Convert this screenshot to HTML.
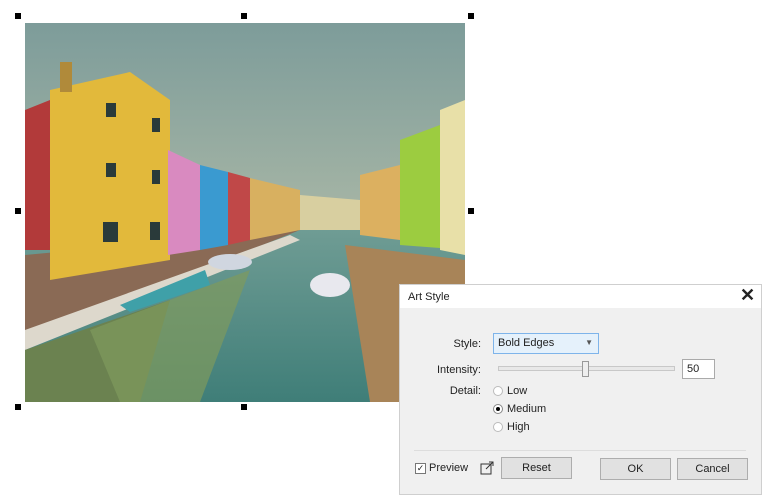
<!DOCTYPE html>
<html><head><style>
body{margin:0;width:768px;height:498px;background:#fff;position:relative;overflow:hidden;font-family:"Liberation Sans",sans-serif;font-size:11px;color:#222}
.h{position:absolute;width:6px;height:6px;background:#000}
.abs{position:absolute}
.btn{position:absolute;height:22px;background:#e1e1e1;border:1px solid #adadad;box-sizing:border-box;text-align:center;line-height:20px}
.rad{position:absolute;width:10px;height:10px;border:1px solid #bbb;border-radius:50%;background:#fff;box-sizing:border-box}
</style></head><body>
<svg class="abs" style="left:25px;top:23px" width="440" height="379" viewBox="25 23 440 379">
<defs>
<linearGradient id="sky" x1="0" y1="0" x2="0" y2="1"><stop offset="0" stop-color="#7d9c9a"/><stop offset=".55" stop-color="#a9b7a6"/><stop offset="1" stop-color="#e4dcb0"/></linearGradient>
<linearGradient id="wat" x1="0" y1="0" x2="0" y2="1"><stop offset="0" stop-color="#6f9c94"/><stop offset="1" stop-color="#3f7e78"/></linearGradient>
</defs>
<rect x="25" y="23" width="440" height="379" fill="url(#sky)"/>
<rect x="25" y="230" width="440" height="172" fill="url(#wat)"/>
<polygon points="25,255 240,235 300,230 25,340" fill="#8a6a55"/>
<polygon points="25,330 290,235 300,240 25,350" fill="#ddd8cc"/>
<polygon points="25,350 170,300 140,402 25,402" fill="#6b8250"/>
<polygon points="90,330 250,270 200,402 120,402" fill="#7f9a5c" opacity=".7"/>
<polygon points="25,110 50,100 50,250 25,250" fill="#b23a3a"/>
<polygon points="50,90 130,72 170,100 170,260 50,280" fill="#e2b93b"/>
<rect x="60" y="62" width="12" height="30" fill="#b08a3a"/>
<polygon points="168,150 200,165 200,250 168,255" fill="#d98ac0"/>
<polygon points="200,165 228,172 228,245 200,250" fill="#3a9ad0"/>
<polygon points="228,172 250,178 250,240 228,245" fill="#c04848"/>
<polygon points="250,178 300,190 300,230 250,240" fill="#d8b060"/>
<polygon points="300,195 360,200 360,230 300,230" fill="#d8cfa0"/>
<polygon points="360,175 400,165 400,240 360,235" fill="#dcb060"/>
<polygon points="400,140 440,125 440,248 400,245" fill="#9ccc40"/>
<polygon points="440,110 465,100 465,255 440,250" fill="#e8e0a8"/>
<polygon points="345,245 465,260 465,402 370,402" fill="#a88458"/>
<polygon points="120,305 205,270 210,285 130,312" fill="#3fa0a8"/>
<ellipse cx="330" cy="285" rx="20" ry="12" fill="#e8e8ee"/>
<ellipse cx="230" cy="262" rx="22" ry="8" fill="#d0d6e0"/>
<g fill="#2a3a3a"><rect x="106" y="103" width="10" height="14"/><rect x="152" y="118" width="8" height="14"/><rect x="106" y="163" width="10" height="14"/><rect x="152" y="170" width="8" height="14"/><rect x="103" y="222" width="15" height="20"/><rect x="150" y="222" width="10" height="18"/></g>
</svg>
<div class="h" style="left:15px;top:13px"></div><div class="h" style="left:241px;top:13px"></div><div class="h" style="left:468px;top:13px"></div>
<div class="h" style="left:15px;top:208px"></div><div class="h" style="left:468px;top:208px"></div>
<div class="h" style="left:15px;top:404px"></div><div class="h" style="left:241px;top:404px"></div>

<div class="abs" style="left:399px;top:284px;width:363px;height:211px;background:#f0f0f0;border:1px solid #cfcfcf;box-sizing:border-box">
<div class="abs" style="left:0;top:0;right:0;height:23px;background:#fff"></div>
<div class="abs" style="left:8px;top:6px">Art Style</div>
<div class="abs" style="left:340px;top:0px;font-size:18px;font-weight:bold">✕</div>
<div class="abs" style="left:0;width:81px;top:53px;text-align:right">Style:</div>
<div class="abs" style="left:93px;top:48px;width:106px;height:21px;border:1px solid #7eb4ea;background:#e5f1fb;box-sizing:border-box;padding:3px 4px">Bold Edges<span class="abs" style="right:5px;top:4px;font-size:8px;color:#555">▼</span></div>
<div class="abs" style="left:0;width:81px;top:79px;text-align:right">Intensity:</div>
<div class="abs" style="left:98px;top:81px;width:175px;height:3px;border:1px solid #c8c8c8;background:#e8e8e8"></div>
<div class="abs" style="left:182px;top:76px;width:5px;height:14px;border:1px solid #999;background:#eee"></div>
<div class="abs" style="left:282px;top:74px;width:33px;height:20px;border:1px solid #aaa;background:#fff;box-sizing:border-box;padding:3px 4px">50</div>
<div class="abs" style="left:0;width:81px;top:100px;text-align:right">Detail:</div>
<div class="rad" style="left:93px;top:101px"></div><div class="abs" style="left:107px;top:100px">Low</div>
<div class="rad" style="left:93px;top:119px;border-color:#888"><div class="abs" style="left:2px;top:2px;width:4px;height:4px;border-radius:50%;background:#000"></div></div><div class="abs" style="left:107px;top:118px">Medium</div>
<div class="rad" style="left:93px;top:137px"></div><div class="abs" style="left:107px;top:136px">High</div>
<div class="abs" style="left:14px;top:165px;width:332px;height:1px;background:#ddd"></div>
<div class="abs" style="left:15px;top:178px;width:11px;height:11px;border:1px solid #777;background:#fff;box-sizing:border-box;font-size:9px;line-height:9px;text-align:center">✓</div>
<div class="abs" style="left:29px;top:177px">Preview</div>
<svg class="abs" style="left:80px;top:176px" width="14" height="14"><rect x="1" y="3" width="10" height="10" fill="none" stroke="#333"/><path d="M6 8 L13 1 M9 1 H13 V5" stroke="#333" fill="none"/></svg>
<div class="btn" style="left:101px;top:172px;width:71px">Reset</div>
<div class="btn" style="left:200px;top:173px;width:71px">OK</div>
<div class="btn" style="left:277px;top:173px;width:71px">Cancel</div>
</div>
</body></html>
